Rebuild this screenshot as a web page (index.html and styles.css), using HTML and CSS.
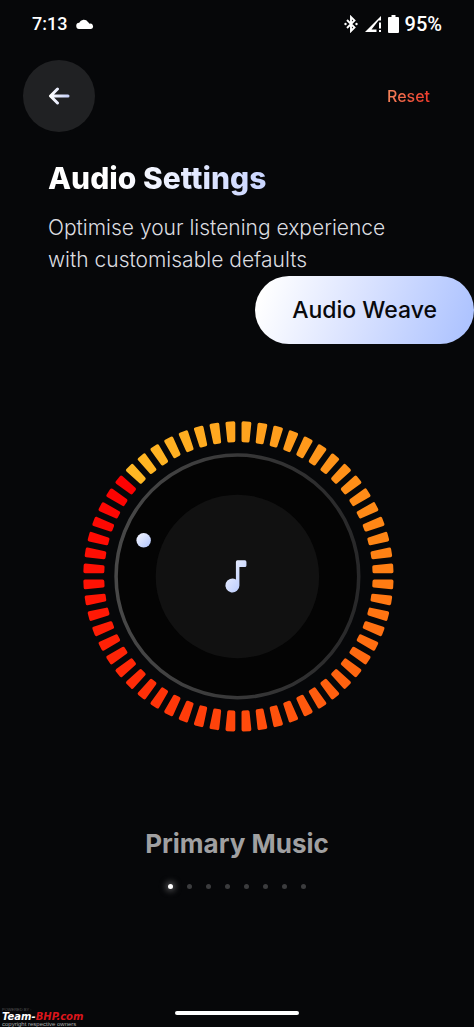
FILE: index.html
```html
<!DOCTYPE html>
<html lang="en">
<head>
<meta charset="utf-8">
<meta name="viewport" content="width=device-width, initial-scale=1">
<title>Audio Settings</title>
<link rel="stylesheet" href="styles.css">
</head>
<body>
<div class="screen">
  <div class="status">
    <span class="clock">7:13</span>
    <svg class="cloud" width="18" height="10" viewBox="0 0 18 10" aria-hidden="true"><path d="M3.500 10a3.100 3.100 0 0 1-.3-6.200A5 5 0 0 1 12 3l1.600 1.700A2.700 2.700 0 0 1 15 10z" fill="#fff"/></svg>
    <span class="status-icons">
      <svg width="14" height="18" viewBox="0 0 14 18" aria-hidden="true"><path d="M3 5l7.500 7.500L7 16V2l3.500 3.500L3 13" fill="none" stroke="#fff" stroke-width="1.900"/><circle cx="1.500" cy="9" r="1.200" fill="#fff"/><circle cx="12.500" cy="9" r="1.200" fill="#fff"/></svg>
      <svg width="18" height="18" viewBox="0 0 18 18" aria-hidden="true"><path d="M17 1v4.500h-2.500L7.500 14.500h5V17H1z" fill="#fff"/><path d="M16 7.500v6M16 15v2" stroke="#fff" stroke-width="2"/></svg>
      <svg width="11" height="18" viewBox="0 0 11 18" aria-hidden="true"><path d="M3.500 0h4v2H10a1 1 0 0 1 1 1v14a1 1 0 0 1-1 1H1a1 1 0 0 1-1-1V3a1 1 0 0 1 1-1h2.500z" fill="#fff"/></svg>
      <span class="charge">95%</span>
    </span>
  </div>
  <header class="topbar">
    <button class="back" type="button" aria-label="Back">
      <svg width="22" height="18" viewBox="0 0 22 18" aria-hidden="true">
        <defs><linearGradient id="arrow" gradientUnits="userSpaceOnUse" x1="2" y1="0" x2="22" y2="0"><stop offset="0" stop-color="#fff"/><stop offset="1" stop-color="#c3cdf8"/></linearGradient></defs>
        <path d="M9.500 2L2.500 9l7 7M3 9h17" fill="none" stroke="url(#arrow)" stroke-width="3" stroke-linecap="round" stroke-linejoin="round"/>
      </svg>
    </button>
    <button class="reset" type="button">Reset</button>
  </header>
  <main class="content">
    <section class="intro">
      <h1 class="title">Audio Settings</h1>
      <p class="lead">Optimise your listening experience with customisable defaults</p>
    </section>
    <button class="weave" type="button">Audio Weave</button>
    <svg class="dial" viewBox="-156 -156 312 312" role="img" aria-label="Primary Music dial">
      <defs>
        <linearGradient id="ring" x1="0" x2="1" y1="0" y2="0"><stop offset="0" stop-color="#484848"/><stop offset="1" stop-color="#282829"/></linearGradient>
        <linearGradient id="ice" x1="0" x2="1" y1="0" y2="1"><stop offset="0" stop-color="#f7f8ff"/><stop offset="1" stop-color="#afc3fc"/></linearGradient>
      </defs>
      <g id="ticks"></g>
      <circle r="121" cx="-1" fill="#040404" stroke="url(#ring)" stroke-width="3.500"/>
      <circle r="81.500" cx="-1" fill="#111111"/>
      <circle cx="-94.500" cy="-36" r="7.200" fill="url(#ice)"/>
      <path d="M-1-16H6.500A1.500 1.500 0 0 1 8-14.500v3.500A1.500 1.500 0 0 1 6.500-9.500H1V9A7 7 0 1 1-2.500 3V-14.500A1.500 1.500 0 0 1-1-16z" fill="url(#ice)"/>
    </svg>
    <h2 class="mode">Primary Music</h2>
    <div class="pager"><i class="dot active"></i><i class="dot"></i><i class="dot"></i><i class="dot"></i><i class="dot"></i><i class="dot"></i><i class="dot"></i><i class="dot"></i></div>
  </main>
  <div class="homebar"></div>
  <div class="credit">
    <span class="credit-top">POWERED BY :</span>
    <span class="credit-name">Team-<b>BHP.com</b></span>
    <span class="credit-note">copyright respective owners</span>
  </div>
</div>
<script src="dial.js"></script>
</body>
</html>
```
FILE: dial.js
```js
// Sixty ticks, clockwise from the upper left, yellow through orange to red.
const stops = [[0, [255, 184, 36]], [0.14, [255, 162, 30]], [0.37, [255, 128, 20]], [0.64, [255, 72, 12]], [0.87, [255, 20, 4]], [1, [252, 2, 2]]];

function colourAt(t) {
  const i = Math.max(1, stops.findIndex(([pos]) => pos >= t));
  const [p0, a] = stops[i - 1];
  const [p1, b] = stops[i];
  const k = (t - p0) / (p1 - p0);
  return `rgb(${a.map((v, n) => Math.round(v + (b[n] - v) * k)).join(",")})`;
}

const group = document.getElementById("ticks");
for (let i = 0; i < 60; i++) {
  const tick = document.createElementNS("http://www.w3.org/2000/svg", "path");
  const colour = colourAt(i / 59);
  tick.setAttribute("d", "M-3.200-153H3.200L2.300-135.500H-2.300Z");
  tick.setAttribute("fill", colour);
  tick.setAttribute("stroke", colour);
  tick.setAttribute("stroke-width", "3.400");
  tick.setAttribute("stroke-linejoin", "round");
  tick.setAttribute("transform", `rotate(${i * 6 - 45})`);
  group.appendChild(tick);
}
```
FILE: styles.css
```css
* { box-sizing: border-box; }
body {
  margin: 0;
  background: #060709;
  color: #fff;
  font-family: Inter, "Liberation Sans", sans-serif;
}
button { border: 0; padding: 0; font: inherit; cursor: pointer; }
.screen {
  position: relative;
  display: flex;
  flex-direction: column;
  min-height: 100vh;
  padding-bottom: 12px;
}
.status {
  display: flex;
  align-items: center;
  height: 48px;
  padding: 0 32px;
}
.clock { font: 500 18px/24px Roboto, sans-serif; }
.charge { font: 500 20px/24px Roboto, sans-serif; }
.cloud { margin-left: 9px; }
.status-icons {
  display: flex;
  align-items: center;
  gap: 6px;
  margin-left: auto;
}
.topbar {
  display: flex;
  align-items: center;
  justify-content: space-between;
  padding: 12px 44px 0 23px;
}
.back {
  display: flex;
  align-items: center;
  justify-content: center;
  width: 72px;
  height: 72px;
  border-radius: 50%;
  background: #202123;
}
.reset {
  color: transparent;
  background: linear-gradient(100deg, #f5865c, #ee3528);
  -webkit-background-clip: text;
  background-clip: text;
  font-size: 16px;
  font-weight: 500;
  line-height: 24px;
}
.content { display: flex; flex-direction: column; }
.intro { padding: 28px 48px 0; }
.title {
  width: fit-content;
  margin: 0 0 16px;
  color: transparent;
  background: linear-gradient(100deg, #fff 30%, #c8d4ff);
  -webkit-background-clip: text;
  background-clip: text;
  font-size: 30px;
  font-weight: 800;
  line-height: 36px;
}
.lead {
  margin: 0;
  color: #dcdde0;
  font-size: 21px;
  font-weight: 300;
  line-height: 32px;
}
.weave {
  align-self: flex-end;
  padding: 0 37px;
  border-radius: 34px;
  color: #08090c;
  background: linear-gradient(110deg, #fff 5%, #dce4ff 45%, #a9c0ff);
  font-size: 23px;
  font-weight: 500;
  line-height: 68px;
}
.dial {
  align-self: center;
  width: 66%;
  max-width: 420px;
  margin: 76px 0 0 2px;
}
.mode {
  margin: 95px 0 0;
  color: #a0a0a1;
  font-size: 26px;
  font-weight: 700;
  line-height: 32px;
  text-align: center;
}
.pager {
  display: flex;
  justify-content: center;
  gap: 14px;
  margin: 24px 0;
}
.dot {
  width: 5px;
  height: 5px;
  border-radius: 50%;
  background: #3b3c3e;
}
.active { background: #fff; box-shadow: 0 0 6px 2px #5a5a5c; }
.homebar {
  align-self: center;
  width: 26%;
  height: 4px;
  margin-top: auto;
  border-radius: 2px;
  background: #fff;
}
.credit {
  position: absolute;
  left: 2px;
  bottom: 0;
  display: flex;
  flex-direction: column;
  font-family: "Liberation Sans", sans-serif;
}
.credit-top { color: #555; font-size: 4px; line-height: 4px; }
.credit-name { font: italic 700 10px/9px "DejaVu Sans", sans-serif; }
.credit-name b { color: #d9151b; }
.credit-note { color: #aaa; font-size: 6px; line-height: 6px; }
```
